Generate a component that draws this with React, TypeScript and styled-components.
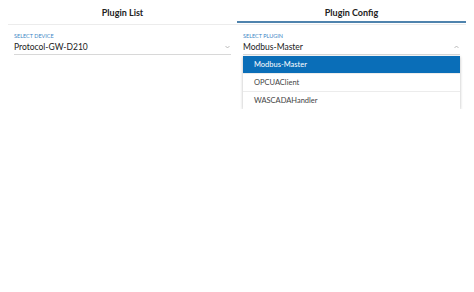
import React from 'react';
import styled, { createGlobalStyle } from 'styled-components';

const GlobalStyle = createGlobalStyle`
  body {
    margin: 0 8px;
    background: #ffffff;
    font-family: Lato, "Open Sans", sans-serif;
    color: #222;
  }
`;

const TabBar = styled.div`
  display: grid;
  grid-template-columns: 1fr 1fr;
  border-bottom: 1px solid #ececec;
  padding-bottom: 1px;
`;

const Tab = styled.div<{ $active?: boolean }>`
  height: 23px;
  padding-top: 3px;
  box-sizing: border-box;
  display: flex;
  align-items: center;
  justify-content: center;
  font-size: 9px;
  font-weight: 700;
  color: #222;
  border-bottom: 2px solid ${({ $active }) => ($active ? '#4f83ad' : 'transparent')};
`;

const FormGrid = styled.div`
  display: grid;
  grid-template-columns: 1fr 1fr;
  align-items: start;
  padding-top: 8px;
`;

const Field = styled.div`
  display: flex;
  flex-direction: column;
  padding: 0 6px;
`;

const Label = styled.div`
  font-size: 5.5px;
  line-height: 7px;
  text-transform: uppercase;
  color: #3d86c6;
`;

const SelectBox = styled.div`
  height: 15px;
  box-sizing: border-box;
  display: flex;
  align-items: flex-end;
  justify-content: space-between;
  padding-bottom: 2px;
  border-bottom: 1px solid #d8d8d8;
  font-size: 8.5px;
  line-height: 10px;
  color: #222;
`;

const Chevron = styled.svg`
  width: 5px;
  height: 4px;
  margin: 0 1px 3px 0;
`;

const Menu = styled.ul`
  margin: 1px 0 0;
  padding: 0;
  list-style: none;
  background: #fff;
  box-shadow: 0 1px 3px rgba(0, 0, 0, 0.28);
`;

const MenuItem = styled.li<{ $selected?: boolean }>`
  height: 17px;
  display: flex;
  align-items: center;
  padding: 0 11px;
  font-size: 7.5px;
  font-weight: 400;
  color: ${({ $selected }) => ($selected ? '#ffffff' : '#444444')};
  background: ${({ $selected }) => ($selected ? '#0a6eb8' : '#ffffff')};

  & + & {
    border-top: 1px solid #ececec;
  }
`;

const ChevronIcon: React.FC<{ up?: boolean }> = ({ up }) => (
  <Chevron viewBox="0 0 5 4">
    <path
      d={up ? 'M0.5 3 L2.5 1 L4.5 3' : 'M0.5 1 L2.5 3 L4.5 1'}
      fill="none"
      stroke="#a0a0a0"
      strokeWidth="0.7"
    />
  </Chevron>
);

const plugins = ['Modbus-Master', 'OPCUAClient', 'WASCADAHandler'];

export default function App() {
  return (
    <>
      <GlobalStyle />
      <TabBar>
        <Tab>Plugin List</Tab>
        <Tab $active>Plugin Config</Tab>
      </TabBar>
      <FormGrid>
        <Field>
          <Label>Select Device</Label>
          <SelectBox>
            Protocol-GW-D210
            <ChevronIcon />
          </SelectBox>
        </Field>
        <Field>
          <Label>Select Plugin</Label>
          <SelectBox>
            Modbus-Master
            <ChevronIcon up />
          </SelectBox>
          <Menu>
            {plugins.map((p, i) => (
              <MenuItem key={p} $selected={i === 0}>
                {p}
              </MenuItem>
            ))}
          </Menu>
        </Field>
      </FormGrid>
    </>
  );
}
